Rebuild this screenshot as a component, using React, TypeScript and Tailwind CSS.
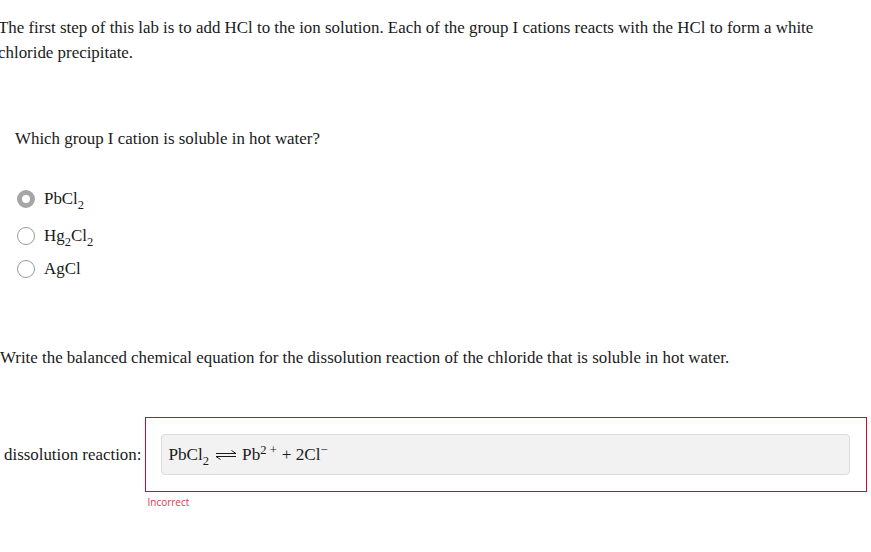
export default function App() {
  const serif = { fontFamily: '"Liberation Serif", "Times New Roman", serif' };
  return (
    <div className="w-[871px] h-[552px] bg-white text-[#1a1a1a] overflow-hidden relative text-[16.9px]" style={serif}>
      <p className="ml-[-2px] mt-[15px] leading-[25px] w-[830px]">
        The first step of this lab is to add HCl to the ion solution. Each of the group I cations reacts with the HCl to form a white chloride precipitate.
      </p>

      <p className="ml-[15px] mt-[62px] leading-[24px]">Which group I cation is soluble in hot water?</p>

      <div className="ml-[17px] mt-[38px] flex flex-col">
        <label className="flex items-center gap-[9px] h-[19px]">
          <span className="w-[18px] h-[18px] rounded-full border-[5px] border-[#a6a6a6] bg-white" />
          <span>PbCl<sub className="text-[12.5px] bottom-[-5px]">2</sub></span>
        </label>
        <label className="flex items-center gap-[9px] h-[19px] mt-[18px]">
          <span className="w-[18px] h-[18px] rounded-full border border-[#9a9a9a] bg-white" />
          <span>Hg<sub className="text-[12.5px] bottom-[-5px]">2</sub>Cl<sub className="text-[12.5px] bottom-[-5px]">2</sub></span>
        </label>
        <label className="flex items-center gap-[9px] h-[19px] mt-[14px]">
          <span className="w-[18px] h-[18px] rounded-full border border-[#9a9a9a] bg-white" />
          <span>AgCl</span>
        </label>
      </div>

      <p className="mt-[68px] leading-[24px]">
        Write the balanced chemical equation for the dissolution reaction of the chloride that is soluble in hot water.
      </p>

      <div className="mt-[47px] flex items-start">
        <span className="ml-[4px] mt-[25px] mr-[4px]">dissolution reaction:</span>
        <div className="flex flex-col">
          <div className="w-[722px] h-[75px] border border-[#c8102e] pl-[15px] pr-[16px] pt-[16px]">
            <div className="h-[41px] bg-[#f2f2f2] border border-[#dcdcdc] rounded-[4px] flex items-center pl-[6px] text-[17.2px]">
              <span>PbCl<sub className="text-[12.5px] bottom-[-5px]">2</sub></span>
              <span className="ml-[6px] mr-[5px] inline-flex">
                <svg width="22" height="10" viewBox="0 0 22 10">
                  <path d="M1 3.5 H21 L16.5 0.5" fill="none" stroke="#1a1a1a" strokeWidth="1" />
                  <path d="M21 6.5 H1 L5.5 9.5" fill="none" stroke="#1a1a1a" strokeWidth="1" />
                </svg>
              </span>
              <span>Pb<sup className="text-[12.5px] top-[-6px]">2 +</sup></span>
              <span className="ml-[5px]">+ 2Cl<sup className="text-[12.5px] top-[-6px]">−</sup></span>
            </div>
          </div>
          <span className="ml-[2px] mt-[3px] text-[10px] leading-[14px] text-[#d63a50]" style={{ fontFamily: '"Open Sans", sans-serif' }}>Incorrect</span>
        </div>
      </div>
    </div>
  );
}
